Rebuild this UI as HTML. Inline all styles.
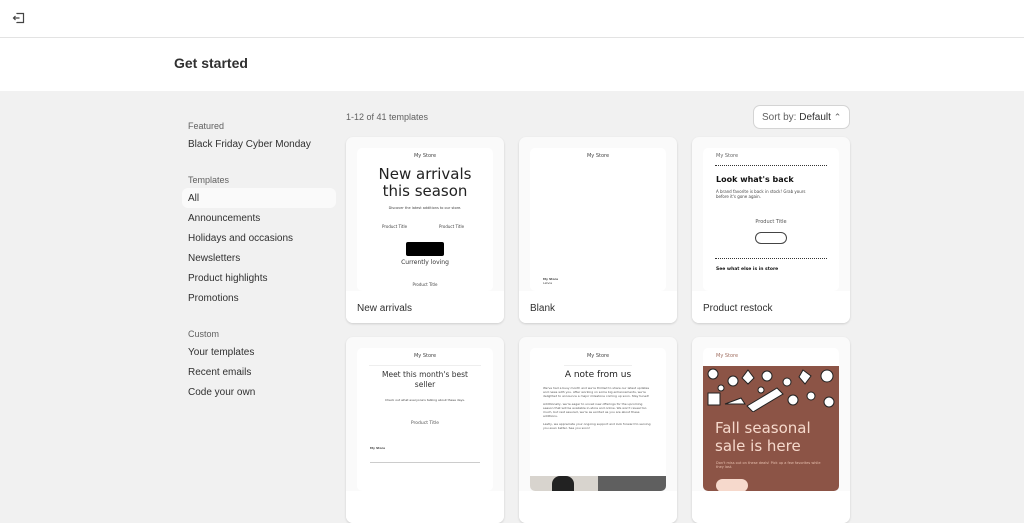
<!DOCTYPE html>
<html><head><style>
*{margin:0;padding:0;box-sizing:border-box}
body{width:1024px;height:498px;overflow:hidden;background:#f1f1f1;font-family:"Liberation Sans","DejaVu Sans",sans-serif;color:#303030;position:relative}
.top{position:absolute;left:0;top:0;width:1024px;height:38px;background:#fff;border-bottom:1px solid #e3e3e3}
.hdr{position:absolute;left:0;top:38px;width:1024px;height:53px;background:#fff}
.hdr h1{position:absolute;left:174px;top:17px;font-size:14px;font-weight:bold;color:#303030}
.side{position:absolute;left:182px;font-size:10px}
.side div{position:absolute;left:6px;white-space:nowrap}
.sec{color:#616161;font-size:9px}
.sel{position:absolute;left:182px;top:188px;width:154px;height:20px;background:#fafafa;border-radius:6px}
.card{position:absolute;width:158px;height:186px;background:#fafafa;border-radius:7px;box-shadow:0 1px 2px rgba(0,0,0,.15);overflow:hidden}
.pv{position:absolute;left:11px;top:11px;width:136px;height:143px;background:#fff;border-radius:5px;overflow:hidden;font-family:"DejaVu Sans",sans-serif}
.lbl{position:absolute;left:0;top:154px;width:158px;height:32px;background:#fff;font-size:10px;padding:12px 11px;color:#303030}
.c{text-align:center;position:absolute;left:0;width:136px}
.t{position:absolute;font-size:4px;color:#444}
</style></head><body>
<div class="top"><svg style="position:absolute;left:12px;top:11px" width="14" height="14" viewBox="0 0 14 14" fill="none" stroke="#444" stroke-width="1.2"><path d="M5 3V2.5h6.5v9H5V11"/><path d="M1.5 7h6M3.5 5L1.5 7l2 2"/></svg></div>
<div class="hdr"><h1>Get started</h1></div>
<div class="sel"></div>
<div class="side" style="top:0">
<div class="sec" style="top:121px">Featured</div>
<div style="top:139px">Black Friday Cyber Monday</div>
<div class="sec" style="top:175px">Templates</div>
<div style="top:193px">All</div>
<div style="top:213px">Announcements</div>
<div style="top:233px">Holidays and occasions</div>
<div style="top:253px">Newsletters</div>
<div style="top:273px">Product highlights</div>
<div style="top:293px">Promotions</div>
<div class="sec" style="top:329px">Custom</div>
<div style="top:347px">Your templates</div>
<div style="top:367px">Recent emails</div>
<div style="top:387px">Code your own</div>
</div>
<div style="position:absolute;left:346px;top:112px;font-size:9px;color:#616161">1-12 of 41 templates</div>
<div style="position:absolute;left:753px;top:105px;width:97px;height:24px;background:#fff;border:1px solid #d4d4d4;border-radius:7px;font-size:10px;color:#616161;padding:6px 8px;white-space:nowrap">Sort by: <span style="color:#303030">Default</span> <span style="font-size:9px">⌃</span></div>

<div class="card" style="left:346px;top:137px"><div class="pv">
<div class="c t" style="top:5px;font-size:5px">My Store</div>
<div class="c" style="top:18px;font-size:15px;line-height:17px;color:#222">New arrivals<br>this season</div>
<div class="c t" style="top:58px;font-size:3.5px">Discover the latest additions to our store.</div>
<div class="t" style="left:25px;top:76px">Product Title</div><div class="t" style="left:82px;top:76px">Product Title</div>
<div style="position:absolute;left:49px;top:94px;width:38px;height:14px;background:#000;border-radius:2px"></div>
<div class="c" style="top:111px;font-size:6px;color:#333">Currently loving</div>
<div class="c t" style="top:134px">Product Title</div>
</div><div class="lbl">New arrivals</div></div>

<div class="card" style="left:519px;top:137px"><div class="pv">
<div class="c t" style="top:5px;font-size:5px">My Store</div>
<div class="t" style="left:13px;top:129px;font-size:3px;font-weight:bold">My Store<br><span style="font-weight:normal">Latvia</span></div>
</div><div class="lbl">Blank</div></div>

<div class="card" style="left:692px;top:137px"><div class="pv">
<div class="t" style="left:13px;top:5px;font-size:5px;color:#666">My Store</div>
<div style="position:absolute;left:12px;top:17px;width:112px;border-top:1px dotted #333"></div>
<div style="position:absolute;left:13px;top:27px;font-size:8px;font-weight:bold;color:#111">Look what's back</div>
<div class="t" style="left:13px;top:41px;width:100px">A brand favorite is back in stock! Grab yours before it's gone again.</div>
<div class="c" style="top:71px;font-size:5px;color:#555">Product Title</div>
<div style="position:absolute;left:52px;top:84px;width:32px;height:12px;border:1px solid #444;border-radius:6px"></div>
<div style="position:absolute;left:12px;top:110px;width:112px;border-top:1px dotted #333"></div>
<div style="position:absolute;left:13px;top:119px;font-size:4.5px;font-weight:bold;color:#111">See what else is in store</div>
</div><div class="lbl">Product restock</div></div>

<div class="card" style="left:346px;top:337px"><div class="pv">
<div class="c t" style="top:5px;font-size:5px">My Store</div>
<div style="position:absolute;left:12px;top:17px;width:112px;border-top:1px solid #eee"></div>
<div class="c" style="top:22px;font-size:7.5px;line-height:10px;color:#333">Meet this month's best<br>seller</div>
<div class="c t" style="top:50px;font-size:3px">Check out what everyone's talking about these days.</div>
<div class="c" style="top:73px;font-size:4.5px;color:#555">Product Title</div>
<div class="t" style="left:13px;top:98px;font-size:3px;font-weight:bold">My Store</div>
<div style="position:absolute;left:13px;top:114px;width:110px;border-top:1px solid #ccc"></div>
</div><div class="lbl"></div></div>

<div class="card" style="left:519px;top:337px"><div class="pv">
<div class="c t" style="top:5px;font-size:5px">My Store</div>
<div style="position:absolute;left:34px;top:17px;width:68px;border-top:1px solid #eee"></div>
<div class="c" style="top:22px;font-size:9px;color:#222">A note from us</div>
<div class="t" style="left:13px;top:38px;width:110px;font-size:3px;line-height:4px;color:#555">We've had a busy month and we're thrilled to share our latest updates and news with you. After working on some big enhancements, we're delighted to announce a major milestone coming up soon. Stay tuned!<br><br>Additionally, we're eager to unveil new offerings for the upcoming season that will be available in-store and online. We won't reveal too much, but rest assured, we're as excited as you are about these additions.<br><br>Lastly, we appreciate your ongoing support and look forward to serving you even better. See you soon!</div>
<div style="position:absolute;left:0;top:128px;width:68px;height:22px;background:#d8d4ce"></div>
<div style="position:absolute;left:22px;top:128px;width:22px;height:22px;background:#222;border-radius:8px 8px 0 0"></div>
<div style="position:absolute;left:68px;top:128px;width:68px;height:22px;background:#5f5f5f"></div>
</div><div class="lbl"></div></div>

<div class="card" style="left:692px;top:337px"><div class="pv">
<div class="t" style="left:13px;top:5px;font-size:5px;color:#a06e60">My Store</div>
<div style="position:absolute;left:0;top:18px;width:136px;height:132px;background:#8c5446"></div>
<svg style="position:absolute;left:0;top:18px" width="136" height="46" fill="#fff" stroke="#222" stroke-width="1"><g><circle cx="10" cy="8" r="5"/><circle cx="30" cy="15" r="5"/><path d="M45 4l6 8-6 6-6-6z"/><circle cx="64" cy="10" r="5"/><circle cx="84" cy="16" r="4"/><path d="M100 4l8 6-6 8-6-7z"/><circle cx="124" cy="10" r="6"/><rect x="5" y="27" width="12" height="12"/><path d="M22 38l16-6 4 6z"/><path d="M44 40l30-18 6 6-30 18z"/><circle cx="90" cy="34" r="5"/><circle cx="108" cy="30" r="4"/><circle cx="126" cy="36" r="5"/><circle cx="18" cy="22" r="3"/><circle cx="58" cy="24" r="3"/></g></svg>
<div style="position:absolute;left:12px;top:71px;font-size:15px;line-height:18px;color:#f6d9cc">Fall seasonal<br>sale is here</div>
<div class="t" style="left:13px;top:113px;width:105px;color:#e7bfae;font-size:3.5px">Don't miss out on these deals! Pick up a few favorites while they last.</div>
<div style="position:absolute;left:13px;top:131px;width:32px;height:13px;background:#f6d9cc;border-radius:7px"></div>
</div><div class="lbl"></div></div>
</body></html>
